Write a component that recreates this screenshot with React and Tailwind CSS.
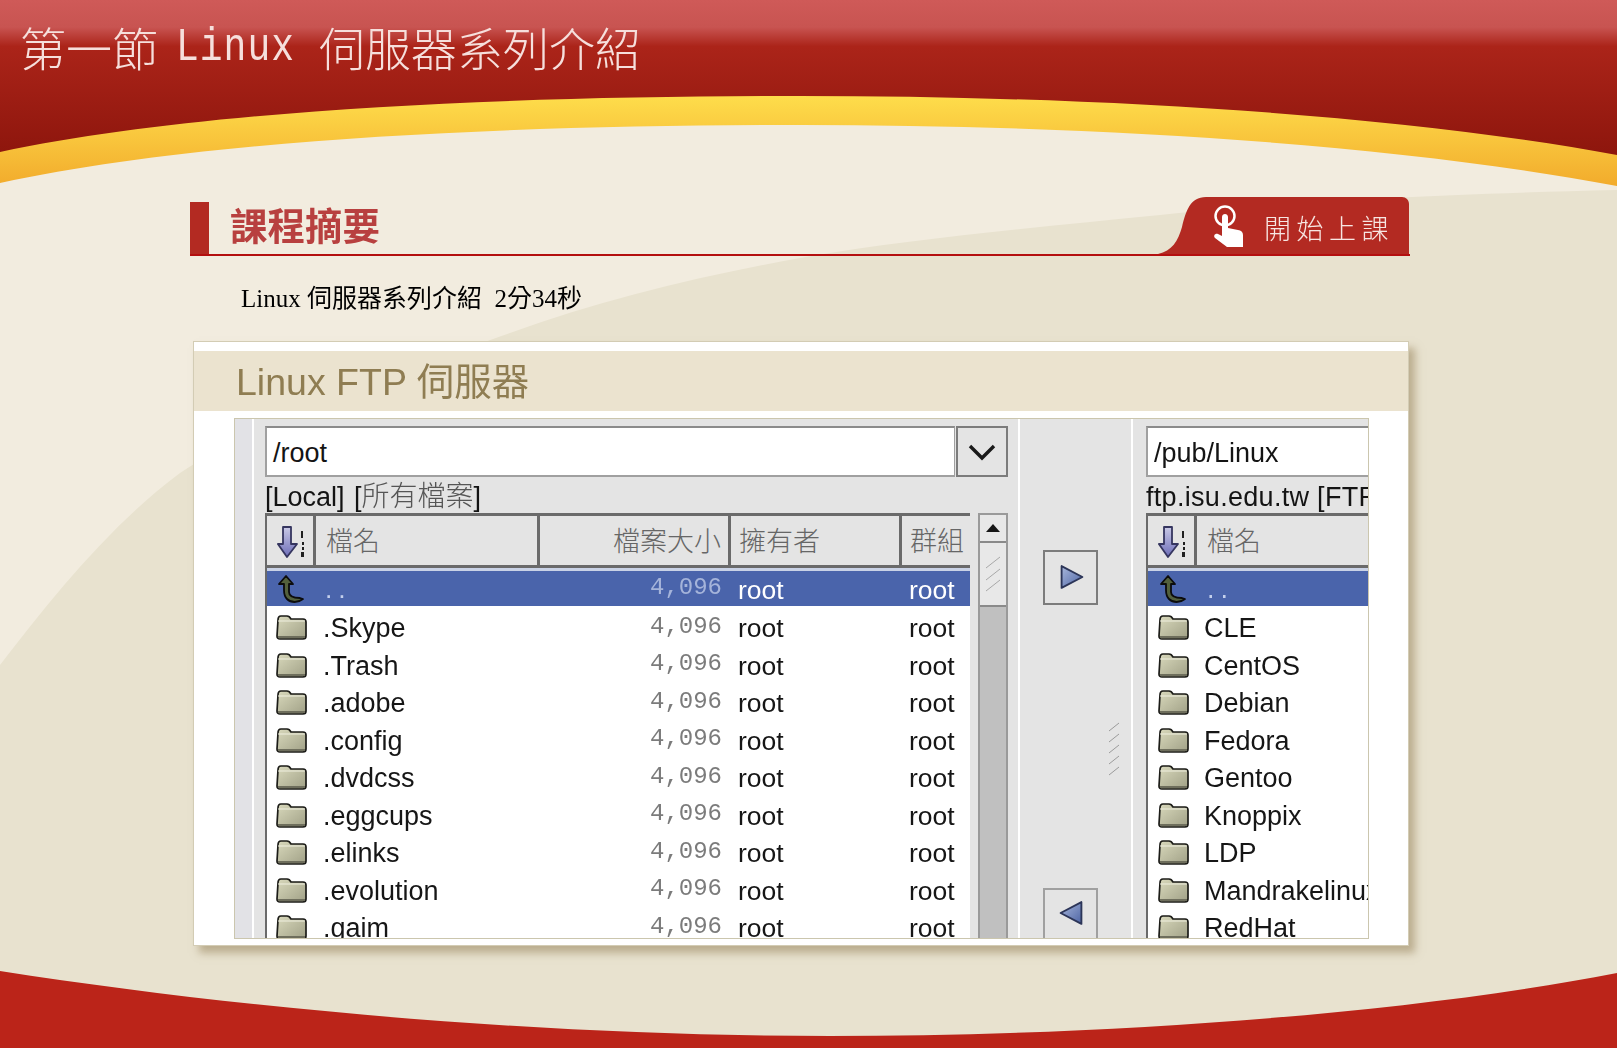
const leftRows = [".Skype", ".Trash", ".adobe", ".config", ".dvdcss", ".eggcups", ".elinks", ".evolution", ".gaim"];
const rightRows = ["CLE", "CentOS", "Debian", "Fedora", "Gentoo", "Knoppix", "LDP", "Mandrakelinux", "RedHat"];

function Backdrop() {
  return (
    <svg className="absolute inset-0" width="1617" height="1048" viewBox="0 0 1617 1048">
      <defs>
        <linearGradient id="red" x1="0" y1="0" x2="0" y2="160" gradientUnits="userSpaceOnUse">
          <stop offset="0" stopColor="#cf5a58" />
          <stop offset="0.17" stopColor="#c85451" />
          <stop offset="0.29" stopColor="#ab2419" />
          <stop offset="1" stopColor="#8c150c" />
        </linearGradient>
        <linearGradient id="gold" x1="0" y1="96" x2="0" y2="186" gradientUnits="userSpaceOnUse">
          <stop offset="0" stopColor="#fedd4b" />
          <stop offset="1" stopColor="#f2ab2c" />
        </linearGradient>
      </defs>
      <rect width="1617" height="1048" fill="#e8e2cf" />
      <rect y="90" width="1617" height="100" fill="url(#gold)" />
      <path d="M0 0H1617V155C1400 115 1100 96 800 96C500 96 200 110 0 152Z" fill="url(#red)" />
      <path d="M0 183C200 140 500 125 800 125C1100 125 1400 145 1617 186V190C1400 195 1250 205 1160 215C1030 228 900 240 800 258C700 276 600 300 510 333C380 380 260 420 180 473C110 525 50 600 0 665Z" fill="#f2ecdf" />
      <path d="M0 971C250 1010 550 1036 830 1036C1100 1036 1400 1015 1617 973V1048H0Z" fill="#bb2419" />
    </svg>
  );
}

function Hand() {
  return (
    <svg width="34" height="46" viewBox="0 0 34 46" className="absolute left-[54px] top-[7px]">
      <circle cx="13" cy="12" r="9.5" fill="none" stroke="#fff" strokeWidth="2.5" />
      <path d="M10 13c0-4 6-4 6 0v11l10 2c3 .6 5 2 5 5v12H15l-12-9c-2-2 0-5 3-4l4 2Z" fill="#fff" />
    </svg>
  );
}

function Folder() {
  return (
    <svg width="31" height="26" viewBox="0 0 31 26" className="shrink-0">
      <defs>
        <linearGradient id="fold" x1="0" y1="0" x2="1" y2="1">
          <stop offset="0" stopColor="#d9d9bc" />
          <stop offset="1" stopColor="#a0a086" />
        </linearGradient>
      </defs>
      <path d="M2 6C2 3 3 2 5 2H11C13 2 14 3 15 5H27C29 5 30 6 30 8V22C30 24 29 25 27 25H4C2 25 1 24 1 22Z" fill="url(#fold)" stroke="#1c1c18" strokeWidth="1.7" />
      <path d="M2 7H29" stroke="#f0f0e0" strokeWidth="1" />
      <path d="M2 23H29" stroke="#6e6e5c" strokeWidth="2" />
    </svg>
  );
}

function UpDir() {
  return (
    <svg width="27" height="30" viewBox="0 0 27 30" className="shrink-0 ml-[2px]">
      <path d="M8 2L15 10H11V18C11 22 14 24 22 24L25 25C20 29 13 29 9 25C6 22 6 19 6 16V10H1Z" fill="#53603c" stroke="#0c0c0c" strokeWidth="1.8" strokeLinejoin="round" />
    </svg>
  );
}

function SortIcon() {
  return (
    <svg width="32" height="34" viewBox="0 0 32 34" className="ml-[5px]">
      <defs>
        <linearGradient id="sortfill" x1="0" y1="0" x2="0" y2="1">
          <stop offset="0" stopColor="#c9c9e6" />
          <stop offset="1" stopColor="#6d6db8" />
        </linearGradient>
      </defs>
      <path d="M6 2H14V19H20L10 32L0.9 19H6Z" fill="url(#sortfill)" stroke="#35355f" strokeWidth="1.8" strokeLinejoin="round" />
      <path d="M24 6H26V13H24ZM25 17H27V20H25ZM25 22H27V25H25ZM24 27H27V32H24Z" fill="#202020" />
    </svg>
  );
}

function Triangle({ left }) {
  return (
    <svg width="26" height="26" viewBox="0 0 24 25">
      <defs>
        <linearGradient id={left ? "triL" : "triR"} x1="0" y1="0" x2="1" y2="1">
          <stop offset="0" stopColor="#a9b8dc" />
          <stop offset="1" stopColor="#4d64a4" />
        </linearGradient>
      </defs>
      <path d={left ? "M22 2V23L2 12.5Z" : "M2 2V23L22 12.5Z"} fill={`url(#${left ? "triL" : "triR"})`} stroke="#2c3558" strokeWidth="1.8" strokeLinejoin="round" />
    </svg>
  );
}

function PathBox({ text, clipped }) {
  return (
    <div className={`flex-1 h-[51px] bg-white border-t-2 border-b-2 border-l-2 border-t-[#8b8b8b] border-b-[#a0a0a0] border-l-[#a0a0a0] flex items-center pl-[6px] pt-[4px] text-[27px] text-[#141414] ${clipped ? "" : "border-r border-r-[#a0a0a0]"}`}>
      {text}
    </div>
  );
}

function HeadCell({ className, children }) {
  return (
    <div className={`h-full bg-[#e4e4e4] border-t-[3px] border-b-[3px] border-[#6a6a6a] flex items-center text-[27px] text-[#666] font-light pt-[3px] ${className}`}>
      {children}
    </div>
  );
}

function SizeCell({ selected }) {
  return (
    <div className={`w-[92px] pb-[1px] text-right font-['Liberation_Mono',monospace] text-[24px] ${selected ? "text-[#a5b4da]" : "text-[#7b7b7b]"}`}>
      4,096
    </div>
  );
}

function LeftRow({ name, selected }) {
  return (
    <div className={`flex items-center text-[26.5px] ${selected ? "h-[35px] mb-[2.5px] bg-[#4a64ab] text-white" : "h-[37.5px] text-[#161616]"}`}>
      <div className="w-[56px] pl-[9px] flex items-center">{selected ? <UpDir /> : <Folder />}</div>
      <div className={`w-[307px] pt-[2px] ${selected ? "pl-[2px] text-[#c4d0ec] tracking-[6px]" : "text-[27px]"}`}>{name}</div>
      <SizeCell selected={selected} />
      <div className="w-[187px] pl-[16px] pt-[4px]">root</div>
      <div className="w-[61px] pt-[4px]">root</div>
    </div>
  );
}

function RightRow({ name, selected }) {
  return (
    <div className={`flex items-center text-[27px] ${selected ? "h-[35px] mb-[2.5px] bg-[#4a64ab]" : "h-[37.5px] text-[#161616]"}`}>
      <div className="w-[56px] pl-[10px] flex items-center shrink-0">{selected ? <UpDir /> : <Folder />}</div>
      <div className={`whitespace-nowrap pt-[2px] ${selected ? "pl-[3px] text-[#c4d0ec] tracking-[6px]" : ""}`}>{name}</div>
    </div>
  );
}

function Scrollbar() {
  return (
    <div className="ml-[8px] w-[30px] h-[425px] border-2 border-[#9a9a9a] border-b-0 bg-[#c0c0c0] flex flex-col">
      <div className="h-[28px] bg-[#e8e8e8] border-b-2 border-[#8a8a8a] flex items-center justify-center">
        <svg width="16" height="10" viewBox="0 0 16 10"><path d="M8 1L15 9H1Z" fill="#161616" /></svg>
      </div>
      <div className="h-[64px] bg-[#e8e8e8] border-b-2 border-[#8a8a8a] flex items-center justify-center">
        <svg width="16" height="36" viewBox="0 0 16 36" fill="none" stroke="#a8a8a8" strokeWidth="1">
          <path d="M1 12L15 1M1 24L15 13M1 35L15 24" />
        </svg>
      </div>
    </div>
  );
}

function App() {
  return (
    <div className="relative w-[1617px] h-[1048px] overflow-hidden font-['Liberation_Sans','Noto_Sans_CJK_TC',sans-serif]">
      <Backdrop />
      <div className="relative blur-[0.4px]">
        <header className="h-[197px] pl-[20px] pt-[13px]">
          <h1 className="flex items-center text-[46px] leading-[62px] font-light text-[#f6dfdc] font-['Noto_Sans_CJK_TC',sans-serif] whitespace-pre">
            <span>第一節</span>
            <span className="inline-block ml-[18px] mt-[4px] font-['Liberation_Mono',monospace] text-[38px] tracking-[1px] scale-y-[1.2]">Linux</span>
            <span className="ml-[24px]">伺服器系列介紹</span>
          </h1>
        </header>

        <section className="ml-[190px] w-[1220px] h-[59px] flex items-end border-b-2 border-[#b40f0f]">
          <div className="w-[19px] h-[52px] bg-[#b32a22]" />
          <h2 className="ml-[21px] mb-[6px] text-[37.5px] leading-[48px] font-bold text-[#b8403f] font-['Noto_Sans_CJK_TC',sans-serif]">課程摘要</h2>
          <div className="ml-auto relative w-[252px] h-[57px] flex items-center justify-end pr-[22px]">
            <svg className="absolute inset-0" width="252" height="57" viewBox="0 0 252 57">
              <path d="M0 57C14 54 20 44 24 30C28 14 32 0 48 0H244C248 0 251 3 251 7V57Z" fill="#b32a22" />
            </svg>
            <Hand />
            <span className="relative top-[2px] text-[27px] tracking-[5.5px] leading-[32px] -mr-[6px] text-[#f7e6e2] font-light font-['Noto_Sans_CJK_TC',sans-serif]">開始上課</span>
          </div>
        </section>

        <p className="ml-[241px] mt-[25px] h-[35px] text-[25px] leading-[36px] text-black whitespace-pre font-['Liberation_Serif','Noto_Sans_CJK_TC',serif]">
          Linux 伺服器系列介紹  2分34秒
        </p>

        <div className="ml-[193px] mt-[25px] w-[1216px] h-[605px] bg-white border border-[#d3ccb4] pt-[9px] shadow-[6px_7px_8px_rgba(150,130,90,0.55)]">
          <div className="h-[60px] bg-[#ebe3cf] pl-[42px] pt-[3px] flex items-center text-[37.5px] text-[#8f7d52]">Linux FTP 伺服器</div>

          <div className="ml-[40px] mt-[7px] w-[1135px] h-[521px] border border-[#cbc6ae] bg-[#e4e4e4] flex overflow-hidden">
            <div className="w-[17px] bg-[#e2e2e6] border-r-2 border-white box-content" />

            <div className="w-[766px] pl-[11px] pt-[7px] border-r-2 border-white">
              <div className="flex w-[743px] h-[51px]">
                <PathBox text="/root" />
                <div className="w-[52px] h-[51px] ml-[1px] border-2 border-[#7c7c7c] flex items-center justify-center">
                  <svg width="28" height="18" viewBox="0 0 28 18" fill="none" stroke="#1a1a1a" strokeWidth="3.4">
                    <path d="M2 3L14 15L26 3" />
                  </svg>
                </div>
              </div>
              <div className="h-[36px] pt-[1px] text-[27px] leading-[38px] text-[#141414] whitespace-pre">
                [Local] <span className="ml-[2px]">[</span><span className="text-[#555] font-light text-[28px]">所有檔案</span>]
              </div>
              <div className="flex">
                <div className="w-[705px] h-[425px] bg-white border-l-2 border-[#6a6a6a] overflow-hidden">
                  <div className="flex h-[58px] border-b-[3px] border-[#c9d2e6]">
                    <HeadCell className="w-[49px] border-r-[3px] justify-center"><SortIcon /></HeadCell>
                    <HeadCell className="w-[224px] border-r-[3px] pl-[10px]">檔名</HeadCell>
                    <HeadCell className="w-[191px] border-r-[3px] justify-end pr-[7px]">檔案大小</HeadCell>
                    <HeadCell className="w-[171px] border-r-[3px] pl-[8px]">擁有者</HeadCell>
                    <HeadCell className="flex-1 pl-[8px]">群組</HeadCell>
                  </div>
                  <LeftRow name=".." selected />
                  {leftRows.map((n) => <LeftRow key={n} name={n} />)}
                </div>
                <Scrollbar />
              </div>
            </div>

            <div className="w-[111px] shrink-0 flex flex-col">
              <div className="mt-[131px] ml-[23px] w-[55px] h-[55px] shrink-0 border-2 border-[#7c7c7c] pb-[2px] pl-[3px] flex items-center justify-center">
                <Triangle />
              </div>
              <div className="mt-[117px] ml-[87px] h-[54px] shrink-0">
                <svg width="14" height="54" viewBox="0 0 14 54" fill="none" stroke="#9a9a9a" strokeWidth="1">
                  <path d="M2 9L12 1M2 20L12 12M2 31L12 23M2 42L12 34M2 53L12 45" />
                </svg>
              </div>
              <div className="mt-[112px] ml-[23px] w-[55px] h-[60px] shrink-0 border-2 border-[#a0a0a0] pt-[10px] flex justify-center">
                <Triangle left />
              </div>
            </div>

            <div className="flex-1 min-w-0 pl-[13px] pt-[7px] border-l-2 border-white overflow-hidden">
              <div className="flex h-[51px]"><PathBox text="/pub/Linux" clipped /></div>
              <div className="h-[36px] pt-[1px] text-[27px] leading-[38px] tracking-[0.3px] text-[#141414] whitespace-nowrap">ftp.isu.edu.tw [FTP]</div>
              <div className="h-[425px] bg-white border-l-2 border-[#6a6a6a] overflow-hidden">
                <div className="flex h-[58px] border-b-[3px] border-[#c9d2e6]">
                  <HeadCell className="w-[49px] border-r-[3px] justify-center"><SortIcon /></HeadCell>
                  <HeadCell className="flex-1 pl-[10px]">檔名</HeadCell>
                </div>
                <RightRow name=".." selected />
                {rightRows.map((n) => <RightRow key={n} name={n} />)}
              </div>
            </div>
          </div>
        </div>
      </div>
    </div>
  );
}

export default App;
